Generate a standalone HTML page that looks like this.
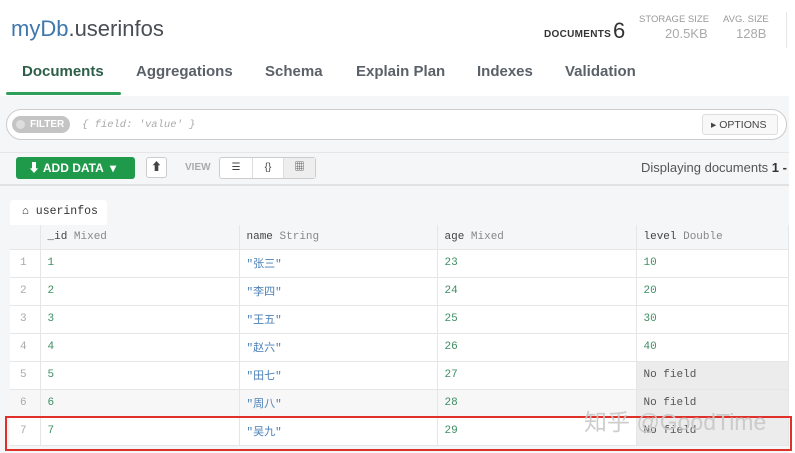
<!DOCTYPE html>
<html><head><meta charset="utf-8"><style>
*{box-sizing:border-box;margin:0;padding:0}
body{width:795px;height:453px;overflow:hidden;background:#fff;font-family:"Liberation Sans","Noto Sans CJK SC",sans-serif;position:relative}
.abs{position:absolute}
.mono{font-family:"Liberation Mono","Noto Sans CJK SC",monospace}
.tab{position:absolute;top:63px;font-size:15px;color:#5b6168;font-weight:bold}
.gray{position:absolute;left:0;top:96px;width:789px;height:357px;background:#f5f6f7}
table{position:absolute;left:10px;top:225px;width:779px;border-collapse:collapse;font-size:11px}
td{height:28px;border-bottom:1px solid #e4e6e8;border-right:1px solid #e4e6e8;padding-left:7px;background:#fff;color:#3e8e63}
td.n{color:#aaa;width:30px;padding-left:10px;border-right:1px solid #e4e6e8}
tr.h td{background:#f5f6f7;color:#444;height:24px}
tr.h td span{color:#888}
td.s{color:#4a7fb5}
td.nf{background:#ececec;color:#555}
</style></head><body>
<div class="abs" style="left:11px;top:16px;font-size:22px;color:#494e53"><span style="color:#3e77ad">myDb</span>.userinfos</div>
<div class="abs" style="left:544px;top:29px;font-size:10px;color:#333;font-weight:bold;letter-spacing:.3px">DOCUMENTS</div>
<div class="abs" style="left:613px;top:18px;font-size:22px;color:#333">6</div>
<div class="abs" style="left:639px;top:14px;font-size:9.5px;color:#999">STORAGE SIZE</div>
<div class="abs" style="left:665px;top:26px;font-size:13px;color:#aaa">20.5KB</div>
<div class="abs" style="left:723px;top:14px;font-size:9.5px;color:#999">AVG. SIZE</div>
<div class="abs" style="left:736px;top:26px;font-size:13px;color:#aaa">128B</div>
<div class="abs" style="left:786px;top:12px;width:1px;height:36px;background:#e6e6e6"></div>
<div class="tab" style="left:22px;color:#2e5e4a">Documents</div>
<div class="tab" style="left:136px">Aggregations</div>
<div class="tab" style="left:265px">Schema</div>
<div class="tab" style="left:356px">Explain Plan</div>
<div class="tab" style="left:477px">Indexes</div>
<div class="tab" style="left:565px">Validation</div>
<div class="abs" style="left:6px;top:92px;width:115px;height:3px;background:#2fa05a;border-radius:2px"></div>
<div class="gray"></div>
<div class="abs" style="left:6px;top:109px;width:781px;height:31px;border:1px solid #ccc;border-radius:16px;background:#fff"></div>
<div class="abs" style="left:12px;top:116px;width:58px;height:17px;border-radius:9px;background:#c4c4c4;color:#fff;font-size:10px;font-weight:bold;line-height:17px;padding-left:18px">FILTER</div>
<div class="abs" style="left:16px;top:120px;width:9px;height:9px;border-radius:50%;background:#ddd"></div>
<div class="abs mono" style="left:82px;top:119px;font-size:10.5px;color:#aaa;font-style:italic">{ field: 'value' }</div>
<div class="abs" style="left:702px;top:114px;width:76px;height:21px;border:1px solid #ddd;border-radius:3px;background:#f8f8f8;font-size:10.5px;color:#444;line-height:20px;padding-left:8px">▸ OPTIONS</div>
<div class="abs" style="left:0;top:152px;width:789px;height:1px;background:#e6e6e6"></div>
<div class="abs" style="left:16px;top:157px;width:119px;height:22px;background:#1e9a4a;border-radius:3px;color:#fff;font-size:12px;font-weight:bold;line-height:22px;padding-left:12px">⬇ ADD DATA &nbsp;▾</div>
<div class="abs" style="left:146px;top:157px;width:21px;height:21px;border:1px solid #ccc;border-radius:3px;background:#fff;font-size:11px;text-align:center;line-height:19px;color:#444">⬆</div>
<div class="abs" style="left:185px;top:162px;font-size:10px;color:#aaa;font-weight:bold">VIEW</div>
<div class="abs" style="left:219px;top:157px;width:97px;height:22px;border:1px solid #ccc;border-radius:3px;background:#fff;display:flex;font-size:10px;color:#444">
<div style="width:33px;text-align:center;line-height:20px;border-right:1px solid #ddd">☰</div>
<div style="width:31px;text-align:center;line-height:20px;border-right:1px solid #ddd">{}</div>
<div style="flex:1;text-align:center;line-height:20px;background:#eee">▦</div></div>
<div class="abs" style="left:641px;top:160px;font-size:13px;color:#555;white-space:nowrap">Displaying documents <b style="color:#333">1 -</b></div>
<div class="abs" style="left:0;top:184px;width:789px;height:2px;background:#e2e2e2"></div>
<div class="abs mono" style="left:10px;top:200px;width:97px;height:26px;background:#fff;border-radius:3px 3px 0 0;font-size:11.5px;color:#333;line-height:24px;padding-left:12px">⌂ userinfos</div>
<table class="mono">
<tr class="h"><td class="n"></td><td style="width:199px">_id <span>Mixed</span></td><td style="width:198px">name <span>String</span></td><td style="width:199px">age <span>Mixed</span></td><td>level <span>Double</span></td></tr>
<tr><td class="n">1</td><td>1</td><td class="s">"张三"</td><td>23</td><td>10</td></tr>
<tr><td class="n">2</td><td>2</td><td class="s">"李四"</td><td>24</td><td>20</td></tr>
<tr><td class="n">3</td><td>3</td><td class="s">"王五"</td><td>25</td><td>30</td></tr>
<tr><td class="n">4</td><td>4</td><td class="s">"赵六"</td><td>26</td><td>40</td></tr>
<tr><td class="n">5</td><td>5</td><td class="s">"田七"</td><td>27</td><td class="nf">No field</td></tr>
<tr><td class="n" style="background:#f7f7f7">6</td><td style="background:#f7f7f7">6</td><td class="s" style="background:#f7f7f7">"周八"</td><td style="background:#f7f7f7">28</td><td class="nf">No field</td></tr>
<tr><td class="n">7</td><td>7</td><td class="s">"吴九"</td><td>29</td><td class="nf">No field</td></tr>
</table>
<div class="abs" style="left:5px;top:416px;width:787px;height:35px;border:2px solid #e0302a"></div>
<div class="abs" style="left:584px;top:403px;font-size:23px;color:rgba(200,200,200,.9);white-space:nowrap">知乎 @GoodTime</div>
</body></html>
